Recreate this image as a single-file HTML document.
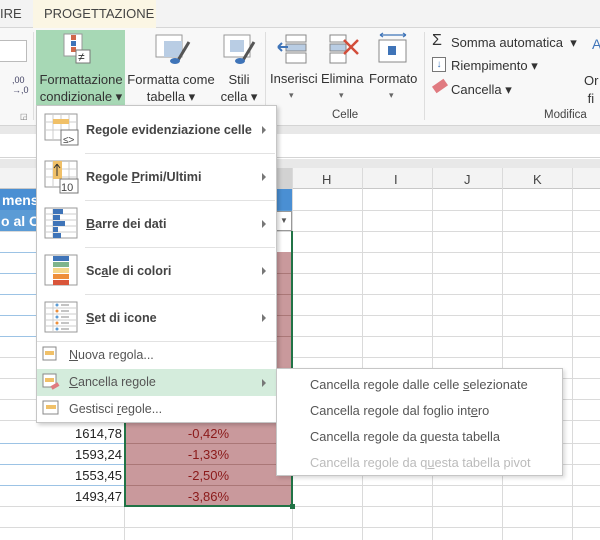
<!DOCTYPE html>
<html><head><meta charset="utf-8"><style>
*{margin:0;padding:0;box-sizing:border-box}
body{width:600px;height:540px;overflow:hidden;background:#fff;font-family:"Liberation Sans",sans-serif;position:relative;font-size:13px;color:#444}
.a{position:absolute}
.hl{position:absolute;height:1px;background:#dadada}
.vl{position:absolute;width:1px;background:#dadada}
.mi{position:absolute;left:0;width:241px;font-weight:bold;font-size:12.6px;color:#444}
.arr{position:absolute;right:10px;width:0;height:0;border-left:4px solid #777;border-top:4px solid transparent;border-bottom:4px solid transparent}
.sm{position:absolute;left:32px;font-size:12.5px;color:#555}
.sub{position:absolute;left:33px;font-size:12.8px;color:#555}
.num{position:absolute;right:478px;font-size:13px;color:#222}
.pct{position:absolute;left:125px;width:167px;text-align:center;font-size:13px;color:#8b1a1a}
</style></head><body>
<div class="a" style="left:0;top:0;width:600px;height:28px;background:#f3f3f3;border-bottom:1px solid #d6d6d6"></div>
<div class="a" style="left:0;top:6px;font-size:13px;color:#444">IRE</div>
<div class="a" style="left:33px;top:0;width:123px;height:28px;background:#fbf6e4"></div>
<div class="a" style="left:44px;top:6px;font-size:13px;color:#444">PROGETTAZIONE</div>
<div class="a" style="left:0;top:28px;width:600px;height:97px;background:#f8f8f8"></div>
<div class="a" style="left:0;top:40px;width:27px;height:22px;background:#fff;border:1px solid #bbb;border-left:none"></div>
<div class="a" style="left:12px;top:75px;font-size:9px;color:#446">,00<br>→,0</div>
<div class="vl" style="left:33px;top:32px;height:88px;background:#dedede"></div>
<div class="a" style="left:36px;top:30px;width:89px;height:75px;background:#a7d8b5"></div>
<svg class="a" style="left:63px;top:32px" width="30" height="33"><rect x="1" y="2" width="18" height="22" fill="#fff" stroke="#999"/><rect x="8" y="3" width="5" height="5" fill="#d0684a"/><rect x="8" y="9" width="5" height="5" fill="#3f74b8"/><rect x="8" y="15" width="5" height="5" fill="#d0684a"/><rect x="13" y="18" width="14" height="13" fill="#fff" stroke="#777"/><text x="15" y="29" font-size="12" fill="#333">≠</text></svg>
<div class="a" style="left:38px;top:71px;font-size:13px;color:#333;line-height:17px;text-align:center;width:86px">Formattazione<br>condizionale ▾</div>
<svg class="a" style="left:155px;top:34px" width="36" height="32"><rect x="1" y="1" width="26" height="22" fill="#fff" stroke="#999"/><rect x="9" y="7" width="18" height="16" fill="#b9cde4"/><path d="M22 28 L34 8" stroke="#555" stroke-width="3"/><ellipse cx="20" cy="27" rx="5" ry="3" fill="#3f74b8"/></svg>
<div class="a" style="left:125px;top:71px;font-size:13px;color:#333;line-height:17px;text-align:center;width:92px">Formatta come<br>tabella ▾</div>
<svg class="a" style="left:222px;top:34px" width="34" height="32"><rect x="2" y="1" width="26" height="22" fill="#fff" stroke="#999"/><rect x="8" y="6" width="14" height="12" fill="#b9cde4"/><path d="M20 28 L32 8" stroke="#555" stroke-width="3"/><ellipse cx="18" cy="27" rx="5" ry="3" fill="#3f74b8"/></svg>
<div class="a" style="left:218px;top:71px;font-size:13px;color:#333;line-height:17px;text-align:center;width:42px">Stili<br>cella ▾</div>
<div class="a" style="left:20px;top:112px;font-size:8px;color:#777">◲</div>
<div class="vl" style="left:265px;top:32px;height:88px;background:#dedede"></div>
<svg class="a" style="left:276px;top:34px" width="32" height="32"><rect x="10" y="1" width="20" height="7" fill="#fff" stroke="#888"/><rect x="10" y="10" width="20" height="7" fill="#b9cde4" stroke="#888"/><rect x="10" y="19" width="20" height="10" fill="#fff" stroke="#888"/><path d="M2 13 H12 M2 13 L6 9 M2 13 L6 17" stroke="#3f74b8" stroke-width="2" fill="none"/></svg>
<div class="a" style="left:270px;top:71px;font-size:13px;color:#333">Inserisci</div>
<svg class="a" style="left:328px;top:34px" width="34" height="32"><rect x="2" y="1" width="16" height="7" fill="#fff" stroke="#888"/><rect x="2" y="10" width="16" height="7" fill="#b9cde4" stroke="#888"/><rect x="2" y="19" width="16" height="10" fill="#fff" stroke="#888"/><path d="M16 6 L30 20 M30 6 L16 20" stroke="#d24d3a" stroke-width="2.5"/></svg>
<div class="a" style="left:321px;top:71px;font-size:13px;color:#333">Elimina</div>
<svg class="a" style="left:377px;top:32px" width="32" height="34"><path d="M3 3 H29 M3 3 L6 1 M3 3 L6 5 M29 3 L26 1 M29 3 L26 5" stroke="#3f74b8" stroke-width="1.2" fill="none"/><rect x="2" y="8" width="27" height="22" fill="#fff" stroke="#888"/><rect x="11" y="14" width="8" height="9" fill="#3f74b8"/></svg>
<div class="a" style="left:369px;top:71px;font-size:13px;color:#333">Formato</div>
<div class="a" style="left:289px;top:90px;font-size:9px;color:#666">▾</div>
<div class="a" style="left:339px;top:90px;font-size:9px;color:#666">▾</div>
<div class="a" style="left:389px;top:90px;font-size:9px;color:#666">▾</div>
<div class="a" style="left:332px;top:109px;font-size:11.5px;color:#444">Celle</div>
<div class="vl" style="left:424px;top:32px;height:88px;background:#dedede"></div>
<div class="a" style="left:432px;top:32px;font-size:16px;color:#333">Σ</div>
<div class="a" style="left:451px;top:35px;font-size:13px;color:#333">Somma automatica &nbsp;▾</div>
<div class="a" style="left:432px;top:57px;width:14px;height:15px;border:1px solid #777;background:#fff;color:#3f74b8;font-size:10px;text-align:center;line-height:13px">↓</div>
<div class="a" style="left:451px;top:58px;font-size:13px;color:#333">Riempimento ▾</div>
<div class="a" style="left:433px;top:82px;width:14px;height:8px;background:#e07a80;transform:rotate(-35deg)"></div>
<div class="a" style="left:451px;top:82px;font-size:13px;color:#333">Cancella ▾</div>
<div class="a" style="left:544px;top:109px;font-size:11.5px;color:#444">Modifica</div>
<div class="a" style="left:584px;top:72px;font-size:13px;color:#333;line-height:18px">Or<br>&nbsp;fi</div>
<div class="a" style="left:592px;top:36px;font-size:14px;color:#3f74b8">A</div>
<div class="a" style="left:0;top:125px;width:600px;height:9px;background:#e8e8e8;border-top:1px solid #d4d4d4"></div>
<div class="a" style="left:0;top:134px;width:600px;height:24px;background:#fff;border-bottom:1px solid #d4d4d4"></div>
<div class="a" style="left:0;top:159px;width:600px;height:9px;background:#e8e8e8"></div>
<div class="a" style="left:0;top:168px;width:600px;height:21px;background:#f3f3f3;border-bottom:1px solid #c8c8c8"></div>
<div class="a" style="left:276px;top:168px;width:16px;height:21px;background:#d2d2d2"></div>
<div class="vl" style="left:292px;top:168px;height:372px"></div>
<div class="vl" style="left:362px;top:168px;height:372px"></div>
<div class="vl" style="left:432px;top:168px;height:372px"></div>
<div class="vl" style="left:502px;top:168px;height:372px"></div>
<div class="vl" style="left:572px;top:168px;height:372px"></div>
<div class="vl" style="left:124px;top:189px;height:351px"></div>
<div class="a" style="left:322px;top:172px;font-size:13px;color:#444">H</div>
<div class="a" style="left:394px;top:172px;font-size:13px;color:#444">I</div>
<div class="a" style="left:464px;top:172px;font-size:13px;color:#444">J</div>
<div class="a" style="left:533px;top:172px;font-size:13px;color:#444">K</div>
<div class="hl" style="left:0;top:210px;width:600px"></div>
<div class="hl" style="left:0;top:231px;width:600px"></div>
<div class="hl" style="left:0;top:252px;width:600px"></div>
<div class="hl" style="left:0;top:273px;width:600px"></div>
<div class="hl" style="left:0;top:294px;width:600px"></div>
<div class="hl" style="left:0;top:315px;width:600px"></div>
<div class="hl" style="left:0;top:336px;width:600px"></div>
<div class="hl" style="left:0;top:357px;width:600px"></div>
<div class="hl" style="left:0;top:378px;width:600px"></div>
<div class="hl" style="left:0;top:399px;width:600px"></div>
<div class="hl" style="left:0;top:420px;width:600px"></div>
<div class="hl" style="left:0;top:443px;width:600px"></div>
<div class="hl" style="left:0;top:464px;width:600px"></div>
<div class="hl" style="left:0;top:485px;width:600px"></div>
<div class="hl" style="left:0;top:506px;width:600px"></div>
<div class="hl" style="left:0;top:527px;width:600px"></div>
<div class="hl" style="left:0;top:252px;width:124px;background:#9cc3e5"></div>
<div class="hl" style="left:0;top:273px;width:124px;background:#9cc3e5"></div>
<div class="hl" style="left:0;top:294px;width:124px;background:#9cc3e5"></div>
<div class="hl" style="left:0;top:315px;width:124px;background:#9cc3e5"></div>
<div class="hl" style="left:0;top:336px;width:124px;background:#9cc3e5"></div>
<div class="hl" style="left:0;top:443px;width:124px;background:#9cc3e5"></div>
<div class="hl" style="left:0;top:464px;width:124px;background:#9cc3e5"></div>
<div class="hl" style="left:0;top:485px;width:124px;background:#9cc3e5"></div>
<div class="a" style="left:0;top:189px;width:292px;height:21px;background:#4a8fd3"></div>
<div class="a" style="left:0;top:210px;width:292px;height:21px;background:#5b9bd5"></div>
<div class="a" style="left:2px;top:192px;font-size:14px;font-weight:bold;color:#fff">mens</div>
<div class="a" style="left:1px;top:213px;font-size:14px;font-weight:bold;color:#fff">o al Co</div>
<div class="a" style="left:276px;top:211px;width:16px;height:20px;background:#fff;border:1px solid #999;font-size:8px;color:#555;text-align:center;line-height:18px">▼</div>
<div class="a" style="left:125px;top:252px;width:167px;height:254px;background:#c9999c"></div>
<div class="hl" style="left:125px;top:273px;width:167px;background:#a77"></div>
<div class="hl" style="left:125px;top:294px;width:167px;background:#a77"></div>
<div class="hl" style="left:125px;top:315px;width:167px;background:#a77"></div>
<div class="hl" style="left:125px;top:336px;width:167px;background:#a77"></div>
<div class="hl" style="left:125px;top:443px;width:167px;background:#a77"></div>
<div class="hl" style="left:125px;top:464px;width:167px;background:#a77"></div>
<div class="hl" style="left:125px;top:485px;width:167px;background:#a77"></div>
<div class="a" style="left:124px;top:231px;width:169px;height:276px;border:2px solid #217346;border-top:none"></div>
<div class="a" style="left:290px;top:504px;width:5px;height:5px;background:#217346"></div>
<div class="num" style="top:426px">1614,78</div>
<div class="num" style="top:447px">1593,24</div>
<div class="num" style="top:468px">1553,45</div>
<div class="num" style="top:489px">1493,47</div>
<div class="pct" style="top:426px">-0,42%</div>
<div class="pct" style="top:447px">-1,33%</div>
<div class="pct" style="top:468px">-2,50%</div>
<div class="pct" style="top:489px">-3,86%</div>
<div class="a" style="left:36px;top:105px;width:241px;height:318px;background:#fff;border:1px solid #c6c6c6;box-shadow:2px 2px 4px rgba(0,0,0,.2)">
  <svg class="a" style="left:7px;top:7px" width="36" height="34"><rect x="1" y="1" width="32" height="26" fill="#fff" stroke="#999"/><path d="M1 9H33M1 17H33M9 1V27M17 1V27M25 1V27" stroke="#ccc"/><rect x="9" y="6" width="16" height="5" fill="#f0c068"/><rect x="17" y="17" width="17" height="15" fill="#fff" stroke="#777"/><text x="19" y="30" font-size="10" fill="#444">≤&gt;</text></svg>
  <div class="mi" style="left:49px;top:17px">Regole evidenziazione celle</div><div class="arr" style="top:20px"></div>
  <div class="hl" style="left:48px;top:47px;width:190px;background:#e2e2e2"></div>
  <svg class="a" style="left:7px;top:54px" width="36" height="34"><rect x="1" y="1" width="32" height="26" fill="#fff" stroke="#999"/><path d="M1 9H33M1 17H33M9 1V27M17 1V27M25 1V27" stroke="#ccc"/><rect x="9" y="1" width="9" height="18" fill="#f0c068"/><path d="M13 16V4M13 4L10 8M13 4L16 8" stroke="#333" fill="none"/><rect x="16" y="19" width="18" height="14" fill="#fff" stroke="#777"/><text x="17" y="31" font-size="11" fill="#444">10</text></svg>
  <div class="mi" style="left:49px;top:64px">Regole <u>P</u>rimi/Ultimi</div><div class="arr" style="top:67px"></div>
  <div class="hl" style="left:48px;top:94px;width:190px;background:#e2e2e2"></div>
  <svg class="a" style="left:7px;top:101px" width="36" height="34"><rect x="1" y="1" width="32" height="30" fill="#fff" stroke="#999"/><path d="M1 7H33M1 13H33M1 19H33M1 25H33M9 1V31" stroke="#ccc"/><rect x="9" y="2" width="10" height="5" fill="#3f74b8"/><rect x="9" y="8" width="7" height="5" fill="#3f74b8"/><rect x="9" y="14" width="12" height="5" fill="#3f74b8"/><rect x="9" y="20" width="5" height="5" fill="#3f74b8"/><rect x="9" y="26" width="8" height="5" fill="#3f74b8"/></svg>
  <div class="mi" style="left:49px;top:111px"><u>B</u>arre dei dati</div><div class="arr" style="top:114px"></div>
  <div class="hl" style="left:48px;top:141px;width:190px;background:#e2e2e2"></div>
  <svg class="a" style="left:7px;top:148px" width="36" height="34"><rect x="1" y="1" width="32" height="30" fill="#fff" stroke="#999"/><rect x="9" y="2" width="16" height="5" fill="#3f74b8"/><rect x="9" y="8" width="16" height="5" fill="#7fb58d"/><rect x="9" y="14" width="16" height="5" fill="#f5d78a"/><rect x="9" y="20" width="16" height="5" fill="#ee8f3a"/><rect x="9" y="26" width="16" height="5" fill="#d9553a"/></svg>
  <div class="mi" style="left:49px;top:158px">Sc<u>a</u>le di colori</div><div class="arr" style="top:161px"></div>
  <div class="hl" style="left:48px;top:188px;width:190px;background:#e2e2e2"></div>
  <svg class="a" style="left:7px;top:195px" width="36" height="34"><rect x="1" y="1" width="32" height="30" fill="#fff" stroke="#999"/><path d="M1 7H33M1 13H33M1 19H33M1 25H33M9 1V31" stroke="#ccc"/><g fill="#5b9bd5"><circle cx="13" cy="4" r="1.5"/><circle cx="13" cy="16" r="1.5"/><circle cx="13" cy="28" r="1.5"/></g><g fill="#ee8f3a"><circle cx="13" cy="10" r="1.5"/><circle cx="13" cy="22" r="1.5"/></g><path d="M17 4H25M17 10H25M17 16H25M17 22H25M17 28H25" stroke="#888"/></svg>
  <div class="mi" style="left:49px;top:205px"><u>S</u>et di icone</div><div class="arr" style="top:208px"></div>
  <div class="hl" style="left:0;top:235px;width:239px;background:#e2e2e2"></div>
  <svg class="a" style="left:5px;top:240px" width="16" height="16"><rect x="1" y="1" width="13" height="13" fill="#fff" stroke="#888"/><rect x="3" y="5" width="9" height="4" fill="#f0c068"/></svg>
  <div class="sm" style="top:242px"><u>N</u>uova regola...</div>
  <div class="a" style="left:0;top:263px;width:239px;height:27px;background:#d4ecdc"></div>
  <svg class="a" style="left:5px;top:267px" width="18" height="18"><rect x="1" y="1" width="13" height="13" fill="#fff" stroke="#888"/><rect x="3" y="5" width="9" height="4" fill="#f0c068"/><rect x="9" y="11" width="8" height="4" fill="#e07a80" transform="rotate(-30 13 13)"/></svg>
  <div class="sm" style="top:269px"><u>C</u>ancella regole</div><div class="arr" style="top:273px"></div>
  <svg class="a" style="left:5px;top:294px" width="18" height="16"><rect x="1" y="1" width="15" height="13" fill="#fff" stroke="#888"/><rect x="4" y="5" width="10" height="4" fill="#f0c068"/></svg>
  <div class="sm" style="top:296px">Gestisci <u>r</u>egole...</div>
</div>
<div class="a" style="left:276px;top:368px;width:287px;height:108px;background:#fff;border:1px solid #c6c6c6;box-shadow:2px 2px 4px rgba(0,0,0,.15)">
  <div class="sub" style="top:8px">Cancella regole dalle celle <u>s</u>elezionate</div>
  <div class="sub" style="top:34px">Cancella regole dal foglio int<u>e</u>ro</div>
  <div class="sub" style="top:60px">Cancella regole da <u>q</u>uesta tabella</div>
  <div class="sub" style="top:86px;color:#bbb">Cancella regole da q<u>u</u>esta tabella pivot</div>
</div>
</body></html>
